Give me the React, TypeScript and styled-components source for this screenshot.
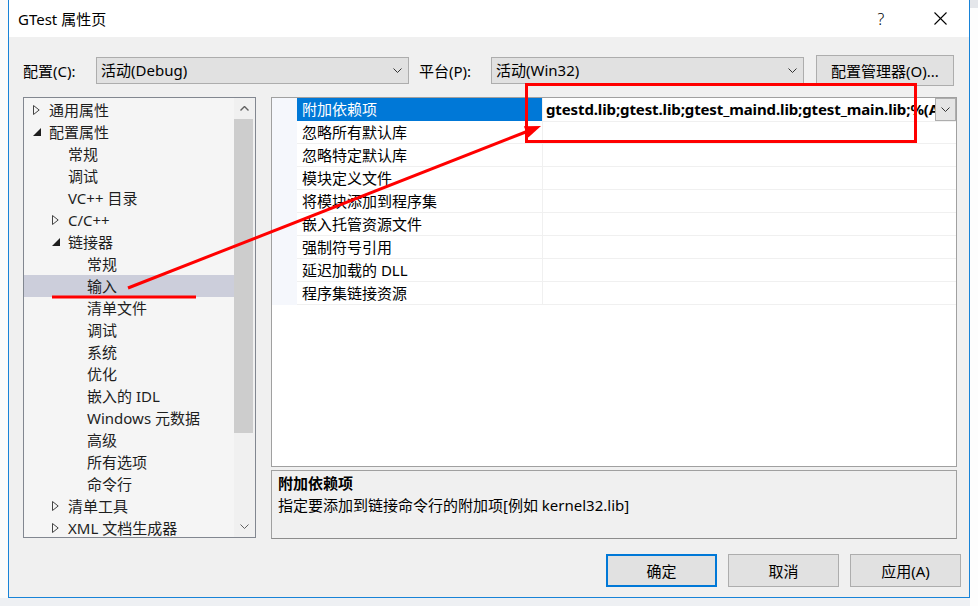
import React from "react";
import styled, { createGlobalStyle } from "styled-components";

const GlobalStyle = createGlobalStyle`
  html, body {
    margin: 0;
    padding: 0;
  }
  body {
    font-family: "Noto Sans", "Noto Sans CJK SC", sans-serif;
    font-size: 15px;
    color: #000;
    background: #eef0f3;
  }
`;

const Screen = styled.div`
  position: relative;
  width: 978px;
  height: 606px;
  overflow: hidden;
  display: flex;
  background: #eef0f3;
`;

const LeftGap = styled.div`
  width: 8px;
  height: 598px;
  background: #fbfbfb;
`;

const RightGap = styled.div`
  flex: 1;
  height: 598px;
  background: #fdfdfd;
  border-top: 8px solid #e4e6ea;
`;

const Dialog = styled.div`
  width: 960px;
  height: 597px;
  border: 1px solid #1883d7;
  border-top: none;
  display: flex;
  flex-direction: column;
  background: #f0f0f0;
`;

const TitleBar = styled.div`
  height: 37px;
  background: #fff;
  display: flex;
  align-items: center;
  padding-left: 9px;
  padding-right: 6px;
`;

const Title = styled.span`
  font-size: 15px;
  line-height: 20px;
`;

const TitleButton = styled.span<{ $first?: boolean }>`
  width: 46px;
  height: 30px;
  display: flex;
  align-items: center;
  justify-content: center;
  margin-left: ${(p) => (p.$first ? "auto" : "13px")};
  font-size: 16px;
  font-weight: 300;
`;

const Body = styled.div`
  flex: 1;
  display: flex;
  flex-direction: column;
  padding: 18px 8px 0 14px;
`;

const ConfigRow = styled.div`
  height: 31px;
  display: flex;
  align-items: center;
`;

const Label = styled.span<{ $w: number; $ml?: number }>`
  width: ${(p) => p.$w}px;
  margin-left: ${(p) => p.$ml ?? 0}px;
  line-height: 20px;
  white-space: nowrap;
`;

const Combo = styled.div`
  width: 313px;
  height: 27px;
  box-sizing: border-box;
  border: 1px solid #adadad;
  background: #e1e1e1;
  display: flex;
  align-items: center;
  padding: 0 6px 0 4px;
  line-height: 20px;
  margin-top: -1px;
`;

const ComboText = styled.span`
  flex: 1;
`;

const Button = styled.button<{ $default?: boolean; $w: number; $h: number; $ml?: number }>`
  width: ${(p) => p.$w}px;
  height: ${(p) => p.$h}px;
  margin-left: ${(p) => p.$ml ?? 0}px;
  box-sizing: border-box;
  border: ${(p) => (p.$default ? "2px solid #0078d7" : "1px solid #adadad")};
  background: #e1e1e1;
  font-family: "Noto Sans", "Noto Sans CJK SC", sans-serif;
  font-size: 15px;
  color: #000;
  padding: 0;
  line-height: 20px;
`;

const Main = styled.div`
  margin-top: 11px;
  display: flex;
  gap: 15px;
`;

const Tree = styled.div`
  width: 233px;
  height: 441px;
  box-sizing: border-box;
  border: 1px solid #828790;
  background: #f5f5f5;
  display: flex;
`;

const TreeList = styled.div`
  flex: 1;
  padding-top: 1px;
  overflow: hidden;
`;

const TreeRow = styled.div<{ $level: number; $selected?: boolean }>`
  height: 22px;
  display: flex;
  align-items: center;
  padding-left: ${(p) => 9 + p.$level * 19}px;
  background: ${(p) => (p.$selected ? "#cccedb" : "transparent")};
  color: #1e1e1e;
  white-space: nowrap;
  line-height: 20px;
`;

const ArrowSlot = styled.span`
  width: 16px;
  display: flex;
  align-items: center;
`;

const Scrollbar = styled.div`
  width: 21px;
  display: flex;
  flex-direction: column;
  background: #f0f0f0;
`;

const ScrollArrow = styled.div`
  height: 21px;
  display: flex;
  align-items: center;
  justify-content: center;
`;

const Thumb = styled.div`
  height: 314px;
  margin-right: 2px;
  background: #cdcdcd;
`;

const Track = styled.div`
  flex: 1;
`;

const RightCol = styled.div`
  width: 686px;
  display: flex;
  flex-direction: column;
  gap: 3px;
`;

const Grid = styled.div`
  height: 370px;
  box-sizing: border-box;
  border: 1px solid #a0a0a0;
  background: #fff;
  overflow: hidden;
`;

const GridRow = styled.div`
  height: 23px;
  display: grid;
  grid-template-columns: 25px 245px 1fr;
`;

const Gutter = styled.div`
  background: #f5f7fc;
`;

const NameCell = styled.div<{ $selected?: boolean }>`
  box-sizing: border-box;
  border-bottom: 1px solid ${(p) => (p.$selected ? "#0078d7" : "#f0f0f0")};
  background: ${(p) => (p.$selected ? "#0078d7" : "#fff")};
  color: ${(p) => (p.$selected ? "#fff" : "#000")};
  padding-left: 5px;
  line-height: 22px;
  white-space: nowrap;
`;

const ValueCell = styled.div`
  box-sizing: border-box;
  border-bottom: 1px solid #f0f0f0;
  border-left: 1px solid #f0f0f0;
  display: flex;
  min-width: 0;
`;

const ValueText = styled.span`
  flex: 1;
  min-width: 0;
  overflow: hidden;
  white-space: nowrap;
  font-weight: 700;
  letter-spacing: -0.12px;
  padding-left: 3px;
  line-height: 22px;
`;

const DropButton = styled.div`
  width: 21px;
  height: 23px;
  box-sizing: border-box;
  border: 1px solid #adadad;
  background: #e5e5e5;
  display: flex;
  align-items: center;
  justify-content: center;
`;

const Description = styled.div`
  height: 69px;
  box-sizing: border-box;
  border: 1px solid #a0a0a0;
  border-bottom-color: #8c8c8c;
  padding: 1px 6px 0;
  line-height: 22px;
`;

const DescTitle = styled.div`
  font-weight: 700;
`;

const ButtonRow = styled.div`
  margin-top: 15px;
  display: flex;
  justify-content: flex-end;
`;

const Overlay = styled.svg`
  position: absolute;
  left: 0;
  top: 0;
  pointer-events: none;
`;

const Chevron: React.FC<{ up?: boolean; color?: string }> = ({ up, color = "#333" }) => (
  <svg width="9" height="5" viewBox="0 0 9 5">
    <polyline
      points={up ? "0.5,4.5 4.5,0.5 8.5,4.5" : "0.5,0.5 4.5,4.5 8.5,0.5"}
      fill="none"
      stroke={color}
      strokeWidth={up ? 1.4 : 1}
    />
  </svg>
);

const TreeArrow: React.FC<{ open: boolean }> = ({ open }) =>
  open ? (
    <svg width="8" height="8" viewBox="0 0 8 8">
      <polygon points="8,0 8,8 0,8" fill="#1e1e1e" />
    </svg>
  ) : (
    <svg width="7" height="10" viewBox="0 0 7 10">
      <polygon points="0.5,0.5 6.2,5 0.5,9.5" fill="none" stroke="#444" strokeWidth="1" />
    </svg>
  );

type TreeItem = { label: string; level: number; arrow?: "open" | "closed"; selected?: boolean };

const treeItems: TreeItem[] = [
  { label: "通用属性", level: 0, arrow: "closed" },
  { label: "配置属性", level: 0, arrow: "open" },
  { label: "常规", level: 1 },
  { label: "调试", level: 1 },
  { label: "VC++ 目录", level: 1 },
  { label: "C/C++", level: 1, arrow: "closed" },
  { label: "链接器", level: 1, arrow: "open" },
  { label: "常规", level: 2 },
  { label: "输入", level: 2, selected: true },
  { label: "清单文件", level: 2 },
  { label: "调试", level: 2 },
  { label: "系统", level: 2 },
  { label: "优化", level: 2 },
  { label: "嵌入的 IDL", level: 2 },
  { label: "Windows 元数据", level: 2 },
  { label: "高级", level: 2 },
  { label: "所有选项", level: 2 },
  { label: "命令行", level: 2 },
  { label: "清单工具", level: 1, arrow: "closed" },
  { label: "XML 文档生成器", level: 1, arrow: "closed" },
];

const properties = [
  "附加依赖项",
  "忽略所有默认库",
  "忽略特定默认库",
  "模块定义文件",
  "将模块添加到程序集",
  "嵌入托管资源文件",
  "强制符号引用",
  "延迟加载的 DLL",
  "程序集链接资源",
];

const App: React.FC = () => {
  return (
    <>
      <GlobalStyle />
      <Screen>
        <LeftGap />
        <Dialog>
          <TitleBar>
            <Title>GTest 属性页</Title>
            <TitleButton $first>?</TitleButton>
            <TitleButton>
              <svg width="13" height="13" viewBox="0 0 13 13">
                <line x1="0.5" y1="0.5" x2="12.5" y2="12.5" stroke="#000" strokeWidth="1.1" />
                <line x1="12.5" y1="0.5" x2="0.5" y2="12.5" stroke="#000" strokeWidth="1.1" />
              </svg>
            </TitleButton>
          </TitleBar>
          <Body>
            <ConfigRow>
              <Label $w={73}>配置(C):</Label>
              <Combo>
                <ComboText>活动(Debug)</ComboText>
                <Chevron />
              </Combo>
              <Label $w={72} $ml={10}>平台(P):</Label>
              <Combo>
                <ComboText>活动(Win32)</ComboText>
                <Chevron />
              </Combo>
              <Button $w={138} $h={31} $ml={12}>配置管理器(O)...</Button>
            </ConfigRow>
            <Main>
              <Tree>
                <TreeList>
                  {treeItems.map((item, i) => (
                    <TreeRow key={i} $level={item.level} $selected={item.selected}>
                      <ArrowSlot>{item.arrow && <TreeArrow open={item.arrow === "open"} />}</ArrowSlot>
                      {item.label}
                    </TreeRow>
                  ))}
                </TreeList>
                <Scrollbar>
                  <ScrollArrow>
                    <Chevron up color="#606060" />
                  </ScrollArrow>
                  <Thumb />
                  <Track />
                  <ScrollArrow>
                    <Chevron color="#606060" />
                  </ScrollArrow>
                </Scrollbar>
              </Tree>
              <RightCol>
                <Grid>
                  {properties.map((name, i) => (
                    <GridRow key={name}>
                      <Gutter />
                      <NameCell $selected={i === 0}>{name}</NameCell>
                      <ValueCell>
                        {i === 0 && (
                          <>
                            <ValueText>
                              gtestd.lib;gtest.lib;gtest_maind.lib;gtest_main.lib;%(AdditionalDependencies)
                            </ValueText>
                            <DropButton>
                              <Chevron />
                            </DropButton>
                          </>
                        )}
                      </ValueCell>
                    </GridRow>
                  ))}
                </Grid>
                <Description>
                  <DescTitle>附加依赖项</DescTitle>
                  <div>指定要添加到链接命令行的附加项[例如 kernel32.lib]</div>
                </Description>
              </RightCol>
            </Main>
            <ButtonRow>
              <Button $default $w={111} $h={33}>确定</Button>
              <Button $w={111} $h={33} $ml={11}>取消</Button>
              <Button $w={111} $h={33} $ml={11}>应用(A)</Button>
            </ButtonRow>
          </Body>
        </Dialog>
        <RightGap />
        <Overlay width="978" height="606" viewBox="0 0 978 606">
          <rect x="526.5" y="84.5" width="389" height="57" fill="none" stroke="#ff0000" strokeWidth="3" />
          <line x1="52" y1="297" x2="196" y2="297" stroke="#ff0000" strokeWidth="3" />
          <line x1="128" y1="288" x2="527" y2="131.5" stroke="#ff0000" strokeWidth="3" />
          <polygon points="541,126 523.9,126.2 528.3,137.4" fill="#ff0000" />
        </Overlay>
      </Screen>
    </>
  );
};

export default App;
